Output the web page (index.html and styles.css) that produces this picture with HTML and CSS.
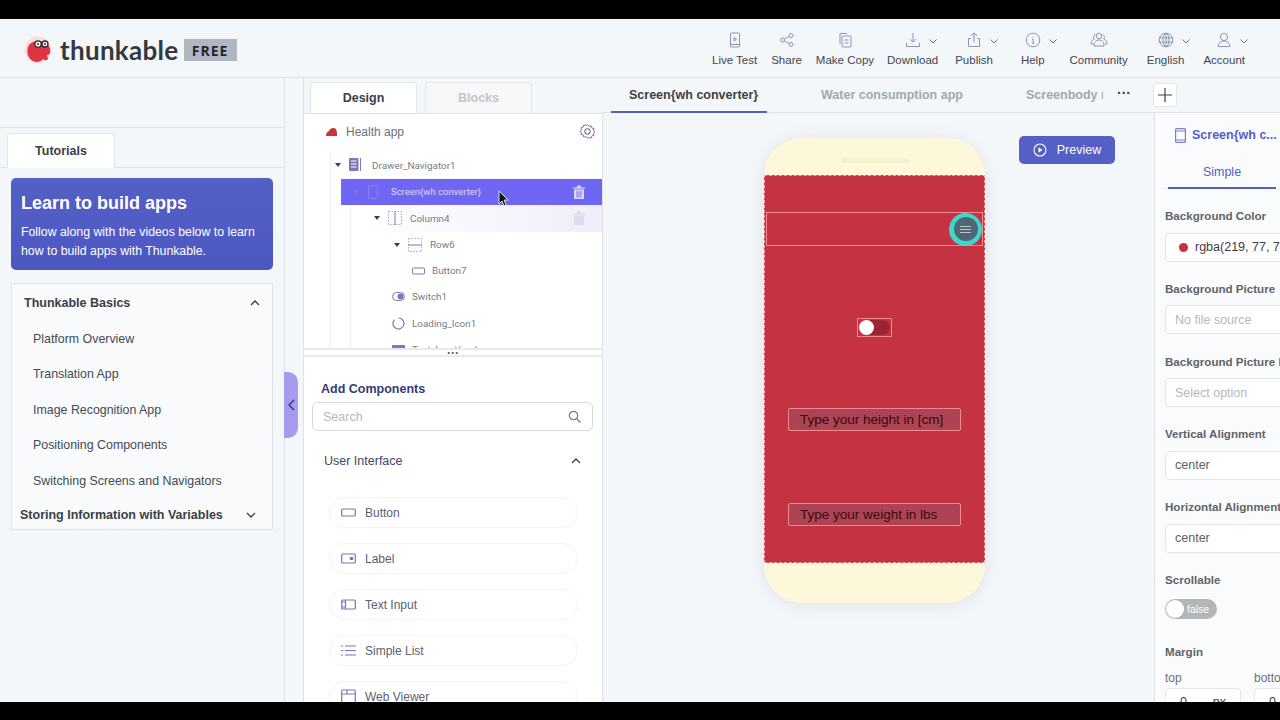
FILE: index.html
```html
<!DOCTYPE html>
<html lang="en">
<head>
    <meta charset="UTF-8">
    <meta name="viewport" content="width=device-width, initial-scale=1.0">
    <title>Thunkable</title>
    <link rel="stylesheet" href="styles.css">
</head>
<body>
<div class="app">
    <div class="letterbox-top"></div>

    <!---------------------------- HEADER ---------------------------->
    <header class="header">
        <div class="logo">
            <svg class="logo-mark" width="30" height="30" viewBox="0 0 30 30">
                <circle cx="14" cy="15" r="13.5" fill="#f6dfe0"/>
                <path d="M5 10c3-4 10-5 15-3 5 2 7 7 6 11-1 2-2 2-3 2l1 4c-2 2-4 1-5 0-2 3-7 4-10 2C3 23 2 15 5 10z" fill="#dd3640"/>
                <circle cx="14" cy="9" r="3.2" fill="#fff" stroke="#33262a" stroke-width="1.3"/>
                <circle cx="21" cy="9" r="3" fill="#fff" stroke="#33262a" stroke-width="1.3"/>
                <circle cx="14" cy="9" r="1" fill="#33262a"/>
                <circle cx="21" cy="9" r="1" fill="#33262a"/>
            </svg>
            <span class="logo-text">thunkable</span>
            <span class="logo-badge">FREE</span>
        </div>
        <nav class="nav">
            <div class="nav-item nav-tight">
                <div class="nav-icon"><svg width="16" height="16" viewBox="0 0 16 16" class="ico"><rect x="3.5" y="1" width="9" height="14" rx="1"/><path d="M3.5 12.5h9M7 5.5l2.500 1.700-2.500 1.700z"/></svg></div>
                <span>Live Test</span>
            </div>
            <div class="nav-item nav-tight">
                <div class="nav-icon"><svg width="16" height="16" viewBox="0 0 16 16" class="ico"><circle cx="3.500" cy="8" r="2"/><circle cx="12" cy="3.500" r="2"/><circle cx="12" cy="12.500" r="2"/><path d="M5.300 7l5-2.700M5.300 9l5 2.700"/></svg></div>
                <span>Share</span>
            </div>
            <div class="nav-item">
                <div class="nav-icon"><svg width="16" height="16" viewBox="0 0 16 16" class="ico"><path d="M3 12V1.500h7"/><rect x="5" y="4" width="9" height="11" rx="1"/><path d="M7.500 8h4M7.500 11h4"/></svg></div>
                <span>Make Copy</span>
            </div>
            <div class="nav-item nav-download">
                <div class="nav-icon"><svg width="16" height="16" viewBox="0 0 16 16" class="ico"><path d="M8 1v9M4.800 7L8 10.200 11.200 7M1.500 11v3.500h13V11"/></svg><svg class="nav-chev" width="8" height="5" viewBox="0 0 8 5"><path d="M.5.500L4 4 7.500.500"/></svg></div>
                <span>Download</span>
            </div>
            <div class="nav-item">
                <div class="nav-icon"><svg width="16" height="16" viewBox="0 0 16 16" class="ico"><path d="M8 10.500V1M4.800 4L8 .8 11.200 4M5 6.500H2.500v8h11v-8H11"/></svg><svg class="nav-chev" width="8" height="5" viewBox="0 0 8 5"><path d="M.5.500L4 4 7.500.500"/></svg></div>
                <span>Publish</span>
            </div>
            <div class="nav-item nav-help">
                <div class="nav-icon"><svg width="16" height="16" viewBox="0 0 16 16" class="ico"><circle cx="8" cy="8" r="6.800"/><path d="M7 7.200h1.200v4M7 11.200h2.400M8 4.500v.8"/></svg><svg class="nav-chev" width="8" height="5" viewBox="0 0 8 5"><path d="M.5.500L4 4 7.500.500"/></svg></div>
                <span>Help</span>
            </div>
            <div class="nav-item nav-community">
                <div class="nav-icon"><svg width="18" height="16" viewBox="0 0 18 16" class="ico"><circle cx="9" cy="4" r="2.800"/><path d="M4 14c0-4 2-6 5-6s5 2 5 6zM5.500 2.800a2.200 2.200 0 0 0-1 4C2 7.500 1 10 1 12h2.500M12.500 2.800a2.200 2.200 0 0 1 1 4c2.500.7 3.500 3.200 3.500 5.200h-2.500"/></svg></div>
                <span>Community</span>
            </div>
            <div class="nav-item nav-english">
                <div class="nav-icon"><svg width="16" height="16" viewBox="0 0 16 16" class="ico"><circle cx="8" cy="8" r="6.800"/><ellipse cx="8" cy="8" rx="3" ry="6.800"/><path d="M8 1.200v13.600M1.500 5.800h13M1.500 10.200h13"/></svg><svg class="nav-chev" width="8" height="5" viewBox="0 0 8 5"><path d="M.5.500L4 4 7.500.500"/></svg></div>
                <span>English</span>
            </div>
            <div class="nav-item">
                <div class="nav-icon"><svg width="16" height="16" viewBox="0 0 16 16" class="ico"><circle cx="8" cy="5" r="3.600"/><path d="M2 14.500c.3-3.500 2.500-5.500 6-5.500s5.700 2 6 5.500z"/></svg><svg class="nav-chev" width="8" height="5" viewBox="0 0 8 5"><path d="M.5.500L4 4 7.500.500"/></svg></div>
                <span>Account</span>
            </div>
        </nav>
    </header>

    <div class="workspace">
        <!---------------------------- TUTORIALS ---------------------------->
        <aside class="left">
            <div class="left-tabs">
                <div class="left-tab">Tutorials</div>
            </div>
            <div class="promo">
                <h2>Learn to build apps</h2>
                <p>Follow along with the videos below to learn how to build apps with Thunkable.</p>
            </div>
            <div class="accordion">
                <div class="acc-head">
                    <span>Thunkable Basics</span>
                    <svg class="acc-chev" width="10" height="6" viewBox="0 0 10 6"><path d="M1 5l4-4 4 4"/></svg>
                </div>
                <div class="acc-link">Platform Overview</div>
                <div class="acc-link">Translation App</div>
                <div class="acc-link">Image Recognition App</div>
                <div class="acc-link">Positioning Components</div>
                <div class="acc-link">Switching Screens and Navigators</div>
                <div class="acc-head acc-head-closed">
                    <span>Storing Information with Variables</span>
                    <svg class="acc-chev" width="10" height="6" viewBox="0 0 10 6"><path d="M1 1l4 4 4-4"/></svg>
                </div>
            </div>
            <div class="collapse-tab">
                <svg width="7" height="12" viewBox="0 0 7 12"><path d="M6 1L1 6l5 5" fill="none" stroke="#2d2a6b" stroke-width="1.200"/></svg>
            </div>
        </aside>

        <!---------------------------- TREE AND COMPONENTS ---------------------------->
        <section class="mid">
            <div class="mid-tabs">
                <div class="mid-tab">Design</div>
                <div class="mid-tab mid-tab-off">Blocks</div>
            </div>
            <div class="tree-panel">
                <div class="tree-title">
                    <svg width="13" height="10" viewBox="0 0 13 10"><path d="M1 9c0-3 1-4 3-5 1-3 5-4 7-2 1 2 1 5 1 7z" fill="#c9343c"/></svg>
                    <span>Health app</span>
                    <svg class="tree-gear" width="17" height="17" viewBox="0 0 24 24"><path d="M12 1.500l2.500 2.400 3.400-.7 1 3.300 3.300 1-.7 3.400 2 1.100-2 2.500.7 3.300-3.300 1-1 3.300-3.400-.7L12 22.500l-2.500-2.400-3.400.7-1-3.300-3.300-1 .7-3.400L.5 12l2-2.500-.7-3.300 3.300-1 1-3.300 3.400.7z" transform="translate(1.200 1.200) scale(.9)"/><circle cx="12" cy="12" r="3.800"/></svg>
                </div>
                <div class="tree">
                    <div class="tree-row depth-0">
                        <i class="caret"></i>
                        <svg class="tree-ico" width="13" height="14" viewBox="0 0 13 14"><rect x="0" y="0" width="9.500" height="13" rx="1" fill="#7d78b8"/><path d="M2 3h5.500M2 6h5.500M2 9h5.500" stroke="#fff" fill="none"/><path d="M11.500 0v13" stroke="#7d78b8" fill="none"/></svg>
                        <span>Drawer_Navigator1</span>
                    </div>
                    <div class="tree-row depth-1 tree-row-active">
                        <i class="caret caret-dim"></i>
                        <svg class="tree-ico" width="11" height="14" viewBox="0 0 11 14"><rect x=".5" y=".5" width="9" height="13" rx="1" fill="none" stroke="#8a83f5"/></svg>
                        <span>Screen{wh converter}</span>
                        <svg class="trash" width="12" height="14" viewBox="0 0 12 14"><path d="M0 2.500h12v1.200H0zM4 .5h4v2H4zM1 4.500h10V14H1z" fill="#d8d6fb"/><path d="M4 6v6.500M6 6v6.500M8 6v6.500" stroke="#7b72f2" fill="none"/></svg>
                        <svg class="cursor" width="12" height="17" viewBox="0 0 12 17"><path d="M1 1v13l3-3 2 5 2-1-2-5h4z" fill="#111" stroke="#fff" stroke-width=".8"/></svg>
                    </div>
                    <div class="tree-row depth-2 tree-row-soft">
                        <i class="caret"></i>
                        <svg class="tree-ico" width="14" height="14" viewBox="0 0 14 14"><path d="M.5.500h13v13H.5z" fill="none" stroke="#a9a6c9" stroke-dasharray="1.500 1.500"/><path d="M7 0v14" stroke="#7d78b8"/></svg>
                        <span>Column4</span>
                        <svg class="trash" width="12" height="14" viewBox="0 0 12 14"><path d="M0 2.500h12v1.200H0zM4 .5h4v2H4zM1 4.500h10V14H1z" fill="#dcdbef"/></svg>
                    </div>
                    <div class="tree-row depth-3">
                        <i class="caret"></i>
                        <svg class="tree-ico" width="14" height="14" viewBox="0 0 14 14"><path d="M.5.500h13v13H.5z" fill="none" stroke="#a9a6c9" stroke-dasharray="1.500 1.500"/><path d="M0 7h14" stroke="#7d78b8"/></svg>
                        <span>Row6</span>
                    </div>
                    <div class="tree-row depth-4">
                        <svg class="tree-ico" width="13" height="8" viewBox="0 0 13 8"><rect x=".5" y="1" width="12" height="6" rx="1" fill="none" stroke="#7d78b8"/></svg>
                        <span>Button7</span>
                    </div>
                    <div class="tree-row depth-5">
                        <svg class="tree-ico" width="13" height="9" viewBox="0 0 13 9"><rect x=".5" y=".5" width="12" height="8" rx="4" fill="none" stroke="#7d78b8"/><circle cx="8.500" cy="4.500" r="3" fill="#7d78b8"/></svg>
                        <span>Switch1</span>
                    </div>
                    <div class="tree-row depth-5">
                        <svg class="tree-ico" width="13" height="13" viewBox="0 0 13 13"><path d="M6.500 1a5.500 5.500 0 1 1-4 1.700" fill="none" stroke="#7d78b8" stroke-width="1.200"/></svg>
                        <span>Loading_Icon1</span>
                    </div>
                    <div class="tree-row depth-5">
                        <svg class="tree-ico" width="13" height="9" viewBox="0 0 13 9"><rect width="13" height="9" rx="1" fill="#7d78b8"/></svg>
                        <span>Text_Input{cm}</span>
                    </div>
                </div>
            </div>
            <div class="splitter"><span>&middot;&middot;&middot;</span></div>
            <div class="components">
                <h3>Add Components</h3>
                <div class="search">
                    <span>Search</span>
                    <svg width="13" height="13" viewBox="0 0 13 13"><circle cx="5.500" cy="5.500" r="4.200" fill="none" stroke="#7b7f8c" stroke-width="1.200"/><path d="M8.700 8.700L12.500 12.500" stroke="#7b7f8c" stroke-width="1.300"/></svg>
                </div>
                <div class="comp-head">
                    <span>User Interface</span>
                    <svg class="acc-chev" width="10" height="6" viewBox="0 0 10 6"><path d="M1 5l4-4 4 4"/></svg>
                </div>
                <div class="comp-list">
                    <div class="comp">
                        <svg width="15" height="15" viewBox="0 0 15 15" class="comp-ico"><rect x=".7" y="4" width="13.600" height="7" rx="1"/></svg>
                        <span>Button</span>
                    </div>
                    <div class="comp">
                        <svg width="15" height="15" viewBox="0 0 15 15" class="comp-ico"><rect x=".7" y="3" width="13.600" height="9" rx="1"/><path d="M9.500 6.500h2v2h-2z" fill="#7b72b8"/></svg>
                        <span>Label</span>
                    </div>
                    <div class="comp">
                        <svg width="15" height="15" viewBox="0 0 15 15" class="comp-ico"><rect x=".7" y="3" width="13.600" height="9" rx="1"/><path d="M4.500 3v9M.7 5h3.800M.7 10h3.800"/></svg>
                        <span>Text Input</span>
                    </div>
                    <div class="comp">
                        <svg width="15" height="15" viewBox="0 0 15 15" class="comp-ico"><path d="M4 3h11M4 7.500h11M4 12h11M0 3h2M0 7.500h2M0 12h2"/></svg>
                        <span>Simple List</span>
                    </div>
                    <div class="comp">
                        <svg width="15" height="15" viewBox="0 0 15 15" class="comp-ico"><rect x=".7" y="1" width="13.600" height="13" rx="1"/><path d="M.7 5h13.600M6 1v4"/></svg>
                        <span>Web Viewer</span>
                    </div>
                </div>
            </div>
        </section>

        <div class="editor">
            <!---------------------------- SCREEN TABS ---------------------------->
            <div class="screen-tabs">
                <div class="screen-tab screen-tab-on">Screen{wh converter}</div>
                <div class="screen-tab">Water consumption app</div>
                <div class="screen-tab screen-tab-cut"><span>Screenbody mass</span></div>
                <div class="screen-more">&middot;&middot;&middot;</div>
                <div class="screen-add">
                    <svg width="14" height="14" viewBox="0 0 14 14"><path d="M7 0v14M0 7h14" stroke="#3c4048" stroke-width="1.200"/></svg>
                </div>
            </div>
            <div class="editor-body">
                <!---------------------------- PHONE ---------------------------->
                <main class="canvas">
                    <div class="phone">
                        <div class="phone-cap"><div class="speaker"></div></div>
                        <div class="screen">
                            <div class="row-outline"><div class="fab"><div class="fab-in"><i></i><i></i><i></i></div></div></div>
                            <div class="switch-box"><div class="switch-track"><div class="switch-knob"></div></div></div>
                            <div class="text-input text-input-first">Type your height in [cm]</div>
                            <div class="text-input">Type your weight in lbs</div>
                        </div>
                        <div class="phone-chin"></div>
                    </div>
                    <div class="preview">
                        <svg width="14" height="14" viewBox="0 0 14 14"><circle cx="7" cy="7" r="6" fill="none" stroke="#fff" stroke-width="1.100"/><path d="M5.500 4.300L9.500 7l-4 2.700z" fill="#fff"/></svg>
                        <span>Preview</span>
                    </div>
                </main>

                <!---------------------------- PROPERTIES ---------------------------->
                <aside class="props">
                    <div class="props-title">
                        <svg width="11" height="15" viewBox="0 0 11 15"><rect x=".6" y=".6" width="9.800" height="13.800" rx="1" fill="none" stroke="#7d80c8" stroke-width="1.200"/><path d="M.6 3h9.800M.6 12h9.800" stroke="#7d80c8"/></svg>
                        <span>Screen{wh c...</span>
                    </div>
                    <div class="props-tabs"><div class="props-tab">Simple</div></div>
                    <div class="prop">
                        <label>Background Color</label>
                        <div class="field field-dark"><i class="swatch"></i>rgba(219, 77, 77, 1)</div>
                    </div>
                    <div class="prop">
                        <label>Background Picture</label>
                        <div class="field field-hint">No file source</div>
                    </div>
                    <div class="prop">
                        <label>Background Picture Resize Mode</label>
                        <div class="field field-hint">Select option</div>
                    </div>
                    <div class="prop">
                        <label>Vertical Alignment</label>
                        <div class="field">center</div>
                    </div>
                    <div class="prop">
                        <label>Horizontal Alignment</label>
                        <div class="field">center</div>
                    </div>
                    <div class="prop prop-switch">
                        <label>Scrollable</label>
                        <div class="toggle"><div class="toggle-knob"></div><span>false</span></div>
                    </div>
                    <div class="prop-margin">
                        <label>Margin</label>
                        <div class="margin-row">
                            <div class="margin-col">
                                <span>top</span>
                                <div class="margin-field"><b>0</b><b>px</b></div>
                            </div>
                            <div class="margin-col">
                                <span>bottom</span>
                                <div class="margin-field"><b>0</b><b>px</b></div>
                            </div>
                        </div>
                    </div>
                </aside>
            </div>
        </div>
    </div>

    <div class="letterbox-bottom"></div>
</div>
</body>
</html>
```

FILE: styles.css
```css
* {
    box-sizing: border-box;
}
body {
    margin: 0;
    font-family: "Liberation Sans", Arial, sans-serif;
    background-color: #f4f7fa;
    color: #3c4048;
}
.app {
    width: 1280px;
    height: 720px;
    display: flex;
    flex-direction: column;
    overflow: hidden;
}
.letterbox-top {
    height: 19px;
    flex: none;
    background: #000;
}
.letterbox-bottom {
    height: 18px;
    flex: none;
    background: #000;
}

/* header */
.header {
    height: 59px;
    flex: none;
    display: flex;
    justify-content: space-between;
    border-bottom: 1px solid #dfe3e8;
    padding: 0 35px 0 24px;
}
.logo {
    display: flex;
    align-items: center;
    height: 64px;
    margin-top: -1px;
}
.logo-mark {
    flex: none;
}
.logo-text {
    font-family: Lato, sans-serif;
    font-weight: 700;
    font-size: 26px;
    color: #33383d;
    margin-left: 6px;
    letter-spacing: 0.3px;
}
.logo-badge {
    margin-left: 5px;
    width: 53px;
    height: 22px;
    background: #b0b7c3;
    color: #23262b;
    font-family: "Open Sans", sans-serif;
    font-weight: 700;
    font-size: 14px;
    letter-spacing: 1px;
    display: flex;
    align-items: center;
    justify-content: center;
}
.nav {
    display: flex;
    gap: 15px;
    padding-top: 13px;
}
.nav-item {
    display: flex;
    flex-direction: column;
    align-items: center;
    font-size: 11.500px;
    color: #3f4650;
}
.nav-tight {
    margin-right: -1px;
}
.nav-download {
    margin-left: -2px;
    margin-right: 2px;
}
.nav-help {
    margin-left: 13px;
    margin-right: 10px;
}
.nav-community {
    margin-right: 4px;
}
.nav-english {
    margin-right: 4px;
}
.nav-icon {
    display: flex;
    align-items: center;
    height: 16px;
    margin-bottom: 6px;
}
.ico {
    fill: none;
    stroke: #8e94b4;
    stroke-width: 1;
}
.nav-chev {
    margin: 3px -16px 0 8px;
    fill: none;
    stroke: #6d7280;
}

/* main columns */
.workspace {
    flex: 1;
    min-height: 0;
    display: flex;
}
.left {
    position: relative;
    width: 285px;
    flex: none;
    border-right: 1px solid #dfe3e8;
    padding-top: 49px;
}
.left-tabs {
    height: 41px;
    padding: 5px 0 0 7px;
    border-top: 1px solid #dfe3e8;
    border-bottom: 1px solid #dfe3e8;
}
.left-tab {
    width: 108px;
    height: 35px;
    background: #fff;
    border: 1px solid #e2e5ea;
    border-bottom: none;
    border-radius: 3px 3px 0 0;
    font-size: 12.5px;
    font-weight: 700;
    display: flex;
    align-items: center;
    justify-content: center;
}
.promo {
    margin: 10px 11px 0;
    height: 92px;
    padding: 15px 10px;
    border-radius: 5px;
    background: linear-gradient(180deg, #5560c6, #4c57c2);
    color: #fff;
}
.promo h2 {
    margin: 0 0 9px;
    font-size: 18px;
}
.promo p {
    margin: 0;
    font-size: 12.300px;
    line-height: 19px;
}
.accordion {
    margin: 13px 11px 0;
    height: 247px;
    border: 1px solid #dfe3e8;
    background: #f8fafb;
    padding: 0 11px 0 8px;
}
.acc-head {
    height: 37px;
    margin-left: 4px;
    display: flex;
    align-items: center;
    justify-content: space-between;
    font-size: 12.5px;
    font-weight: 700;
    color: #3c4048;
    padding-right: 1px;
}
.acc-head-closed {
    height: 32px;
    margin-left: 0;
    padding-right: 5px;
}
.acc-chev {
    fill: none;
    stroke: #3c4048;
    stroke-width: 1.3;
}
.acc-link {
    height: 35.500px;
    margin-left: 13px;
    font-size: 12.400px;
    color: #444a52;
    display: flex;
    align-items: center;
}
.collapse-tab {
    position: absolute;
    left: 284px;
    top: 294px;
    width: 14px;
    height: 66px;
    background: #a79bef;
    border-radius: 0 10px 10px 0;
    display: flex;
    align-items: center;
    justify-content: center;
    z-index: 2;
}

/* design panel */
.mid {
    width: 300px;
    flex: none;
    margin-left: 18px;
    display: flex;
    flex-direction: column;
}
.mid-tabs {
    height: 35px;
    flex: none;
    display: flex;
    gap: 8px;
    padding: 4px 0 0 6px;
    border-left: 1px solid #dfe3e8;
}
.mid-tab {
    width: 107px;
    height: 31px;
    background: #fff;
    border: 1px solid #e2e5ea;
    border-bottom: none;
    border-radius: 3px 3px 0 0;
    font-size: 12.5px;
    font-weight: 700;
    display: flex;
    align-items: center;
    justify-content: center;
}
.mid-tab-off {
    background: #f6f8fa;
    color: #c3c6cc;
}
.tree-panel {
    height: 235px;
    flex: none;
    overflow: hidden;
    background: #fff;
    border: 1px solid #dfe3e8;
    border-bottom: none;
}
.tree-title {
    display: flex;
    align-items: center;
    height: 38px;
    padding: 0 6px 3px 21px;
    font-size: 12px;
    color: #6d7178;
}
.tree-title span {
    margin-left: 8px;
}
.tree-gear {
    margin-left: auto;
    fill: none;
    stroke: #70769a;
    stroke-width: 1.500;
}
.tree {
    font-family: Roboto, sans-serif;
    background:
        linear-gradient(#eef0f3, #eef0f3) 26px 0 / 1px 100% no-repeat,
        linear-gradient(#eef0f3, #eef0f3) 46px 0 / 1px 100% no-repeat;
}
.tree-row {
    position: relative;
    height: 26.500px;
    display: flex;
    align-items: center;
    font-size: 9.900px;
    color: #777b84;
}
.tree-ico {
    flex: none;
}
.caret {
    width: 0;
    height: 0;
    flex: none;
    border-left: 3px solid transparent;
    border-right: 3px solid transparent;
    border-top: 4px solid #3c4048;
    margin-right: 8px;
}
.caret-dim {
    border-top-color: #7a71f2;
}
.depth-0 {
    padding-left: 31px;
}
.depth-0 span {
    margin-left: 10px;
}
.depth-1 {
    margin-left: 37px;
    padding-left: 13px;
}
.depth-1 span {
    margin-left: 12px;
}
.depth-2 {
    margin-left: 58px;
    padding-left: 12px;
}
.depth-2 span {
    margin-left: 8px;
}
.depth-3 {
    padding-left: 90px;
}
.depth-3 span {
    margin-left: 8px;
}
.depth-4 {
    height: 25.500px;
    padding-left: 108px;
}
.depth-4 span {
    margin-left: 7px;
}
.depth-5 {
    padding-left: 88px;
}
.depth-5 span {
    margin-left: 7px;
}
.tree-row-active {
    background: #6f66f4;
    color: #dcdafc;
    font-size: 9.500px;
}
.tree-row-soft {
    background: linear-gradient(90deg, #ffffff, #eeeefb);
}
.trash {
    position: absolute;
    right: 17px;
    top: 6px;
}
.cursor {
    position: absolute;
    left: 157px;
    top: 11px;
    z-index: 3;
}
.splitter {
    height: 9px;
    flex: none;
    background: #fff;
    border: 1px solid #dfe3e8;
    border-width: 2px 1px 2px 1px;
    border-top-color: #e6e9ed;
    border-bottom-color: #e6e9ed;
    display: flex;
    align-items: center;
    justify-content: center;
    font-size: 12px;
    font-weight: 700;
    color: #555b66;
    line-height: 4px;
}
.components {
    flex: 1;
    min-height: 0;
    overflow: hidden;
    background: #fff;
    border-left: 1px solid #dfe3e8;
    border-right: 1px solid #dfe3e8;
    padding: 25px 9px 0 8px;
}
.components h3 {
    margin: 0 0 5px 9px;
    font-size: 12.500px;
    font-weight: 700;
    color: #343b74;
    line-height: 15px;
}
.search {
    height: 29px;
    border: 1px solid #d7dade;
    border-radius: 5px;
    display: flex;
    align-items: center;
    justify-content: space-between;
    padding: 0 11px 0 10px;
    font-size: 12.500px;
    color: #b5b8be;
}
.comp-head {
    display: flex;
    align-items: center;
    justify-content: space-between;
    height: 60px;
    padding: 0 12px 0 12px;
    font-size: 12.500px;
    color: #3f4668;
}
.comp-list {
    display: flex;
    flex-direction: column;
    gap: 15px;
    padding: 6px 15px 0 17px;
}
.comp {
    height: 31px;
    flex: none;
    display: flex;
    align-items: center;
    gap: 9px;
    padding-left: 11px;
    border: 1px solid #f2f3f6;
    border-radius: 16px;
    font-size: 12px;
    color: #5b5f70;
}
.comp-ico {
    fill: none;
    stroke: #7b72b8;
    stroke-width: 1.200;
}

/* editor */
.editor {
    flex: 1;
    min-width: 0;
    display: flex;
    flex-direction: column;
}
.screen-tabs {
    height: 35px;
    flex: none;
    display: flex;
    align-items: stretch;
    border-bottom: 1px solid #dfe3e8;
    padding-left: 8px;
    font-size: 12.500px;
    font-weight: 700;
}
.screen-tab {
    display: flex;
    align-items: center;
    color: #a3a7ae;
    white-space: nowrap;
}
.screen-tab:nth-child(1) {
    width: 156px;
    padding-left: 18px;
}
.screen-tab:nth-child(2) {
    margin-left: 54px;
    width: 142px;
}
.screen-tab-on {
    color: #3c4048;
    border-bottom: 2px solid #5560c6;
    margin-bottom: -1px;
}
.screen-tab-cut {
    margin-left: 63px;
    width: 77px;
    overflow: hidden;
}
.screen-more {
    margin-left: 13px;
    width: 16px;
    color: #3c4048;
    font-size: 14px;
    line-height: 30px;
    text-align: center;
}
.screen-add {
    margin: 5px 0 0 21px;
    width: 24px;
    height: 24px;
    flex: none;
    background: #fff;
    border: 1px solid #e2e5ea;
    border-radius: 3px;
    display: flex;
    align-items: center;
    justify-content: center;
}
.editor-body {
    flex: 1;
    min-height: 0;
    display: flex;
}
.canvas {
    width: 551px;
    flex: none;
    display: flex;
    align-items: flex-start;
    padding: 25px 0 0 161px;
}
.phone {
    width: 221px;
    flex: none;
    display: flex;
    flex-direction: column;
    box-shadow: 0 2px 18px rgba(120, 130, 150, 0.18);
    border-radius: 38px;
}
.phone-cap {
    height: 37px;
    background: #fdf8d9;
    border-radius: 38px 38px 0 0;
    padding-top: 20px;
    display: flex;
    justify-content: center;
}
.speaker {
    width: 68px;
    height: 5px;
    border-radius: 3px;
    background: #f6f0cf;
}
.phone-chin {
    height: 40px;
    background: #fdf8d9;
    border-radius: 0 0 38px 38px;
}
.screen {
    height: 388px;
    background: #c53342;
    border: 1px dashed #f1a9a4;
    padding: 36px 1px 0;
    display: flex;
    flex-direction: column;
    align-items: center;
}
.row-outline {
    width: 100%;
    height: 34px;
    flex: none;
    border: 1px solid #ee8c8f;
    display: flex;
    align-items: center;
    justify-content: flex-end;
}
.fab {
    width: 33px;
    height: 33px;
    flex: none;
    border-radius: 50%;
    background: #3dd6c8;
    display: flex;
    align-items: center;
    justify-content: center;
}
.fab-in {
    width: 24px;
    height: 24px;
    border-radius: 50%;
    background: #4f6675;
    display: flex;
    flex-direction: column;
    align-items: center;
    justify-content: center;
    gap: 2px;
}
.fab-in i {
    width: 11px;
    height: 1px;
    background: #b9c4cc;
}
.switch-box {
    margin-top: 72px;
    width: 35px;
    height: 19px;
    flex: none;
    border: 1px solid #ee8c8f;
    padding: 1px;
}
.switch-track {
    height: 100%;
    border-radius: 8px;
    background: #9c2434;
}
.switch-knob {
    width: 15px;
    height: 15px;
    border-radius: 50%;
    background: #fff;
}
.text-input {
    width: 173px;
    height: 23px;
    flex: none;
    margin-top: 72px;
    padding-left: 11px;
    border: 1px solid #ee8c8f;
    border-radius: 2px;
    background: #ad4353;
    color: #3b0a10;
    font-size: 13.500px;
    line-height: 21px;
}
.text-input-first {
    margin-top: 71px;
}
.preview {
    margin: -2px 0 0 34px;
    width: 96px;
    height: 28px;
    flex: none;
    background: #5560c6;
    border-radius: 5px;
    color: #fff;
    font-size: 12.500px;
    display: flex;
    align-items: center;
    justify-content: center;
    gap: 10px;
}

/* properties */
.props {
    flex: 1;
    min-width: 0;
    overflow: hidden;
    border-left: 1px solid #dfe3e8;
    background: #fafbfc;
    padding: 0 0 0 10px;
}
.props-title {
    height: 44px;
    display: flex;
    align-items: center;
    gap: 6px;
    padding-left: 10px;
    font-size: 12.500px;
    font-weight: 700;
    color: #5560c6;
    white-space: nowrap;
}
.props-tabs {
    height: 32px;
    width: 200px;
    border-bottom: 1px solid #eceef1;
}
.props-tab {
    width: 108px;
    margin-left: 3px;
    height: 32px;
    border-bottom: 2px solid #5560c6;
    color: #5560c6;
    font-size: 12.500px;
    display: flex;
    align-items: center;
    justify-content: center;
}
.prop {
    height: 72.800px;
    padding-top: 19px;
    white-space: nowrap;
}
.prop label,
.prop-margin label {
    display: block;
    font-size: 11.600px;
    font-weight: 700;
    color: #5f6369;
    line-height: 15px;
    margin-bottom: 9.500px;
}
.field {
    width: 200px;
    height: 29px;
    background: #fff;
    border: 1px solid #e2e5ea;
    border-radius: 4px;
    display: flex;
    align-items: center;
    padding-left: 9px;
    font-size: 12.500px;
    color: #5d6168;
}
.field-dark {
    color: #3c4048;
    padding-left: 13px;
    overflow: hidden;
}
.field-hint {
    color: #b5b8be;
}
.swatch {
    width: 9px;
    height: 9px;
    flex: none;
    border-radius: 50%;
    background: #c53342;
    margin-right: 7px;
}
.toggle {
    display: flex;
    align-items: center;
    width: 52px;
    height: 20px;
    margin-top: 12px;
    border-radius: 10px;
    background: #b5b5b7;
    padding-left: 1px;
    font-size: 10.500px;
    color: #fff;
}
.toggle-knob {
    width: 18px;
    height: 18px;
    border-radius: 50%;
    background: #fff;
    margin-right: 3px;
}
.prop-margin {
    padding-top: 18px;
}
.prop-margin label {
    margin-bottom: 12px;
}
.margin-row {
    display: flex;
    gap: 13px;
}
.margin-col span {
    display: block;
    font-size: 12px;
    color: #6d7178;
    margin-bottom: 3px;
}
.margin-field {
    width: 76px;
    height: 29px;
    background: #fff;
    border: 1px solid #e2e5ea;
    border-radius: 4px;
    display: flex;
    justify-content: space-between;
    align-items: center;
    padding: 0 14px;
    font-size: 12.500px;
    font-weight: 400;
}
.margin-field b {
    font-weight: 400;
}
```
